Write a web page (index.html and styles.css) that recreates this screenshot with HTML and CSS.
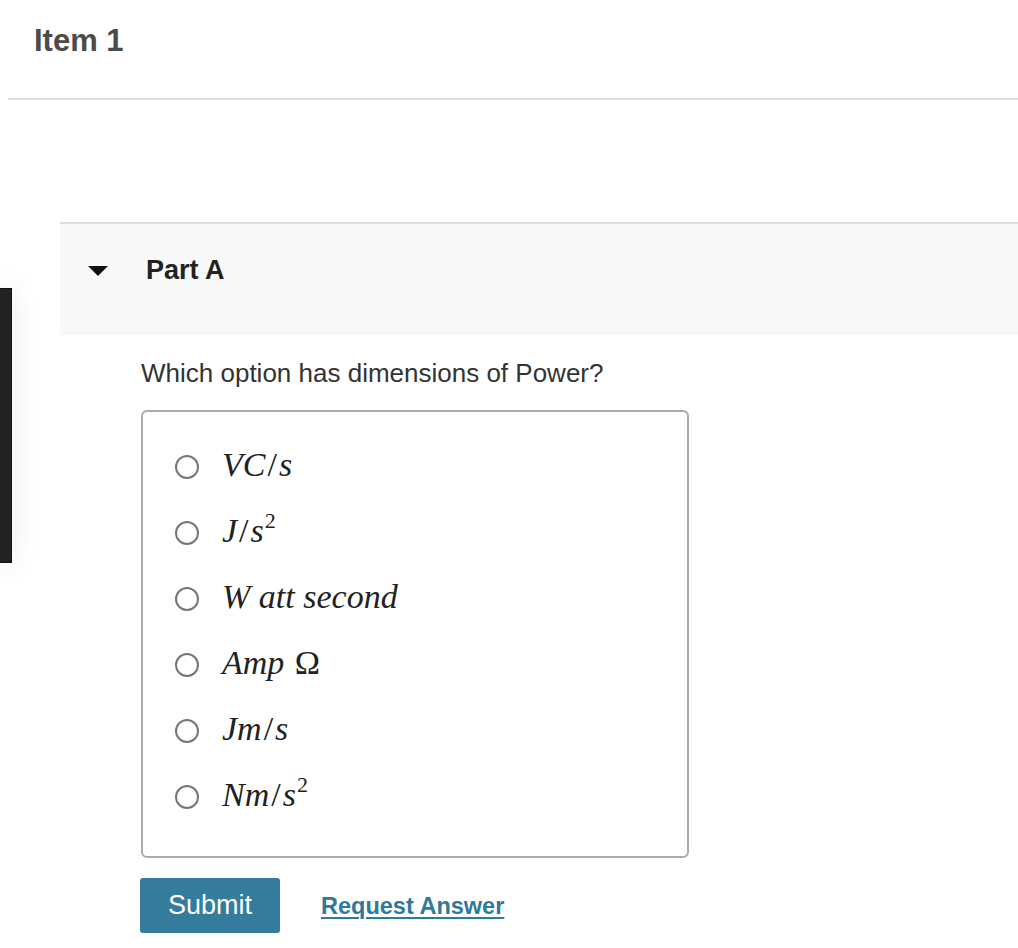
FILE: index.html
```
<!DOCTYPE html>
<html lang="en">
<head>
    <meta charset="UTF-8">
    <title>Item 1</title>
    <link rel="stylesheet" href="styles.css">
</head>
<body>
    <div class="side-tab"></div>

    <header class="item-header">
        <h1>Item 1</h1>
    </header>
    <hr class="divider">

    <section class="part">
        <div class="part-head">
            <svg class="caret" width="20" height="10" viewBox="0 0 20 10"><polygon points="0,0 20,0 10,10" fill="#111"/></svg>
            <h2>Part A</h2>
        </div>

        <div class="part-body">
            <p class="question">Which option has dimensions of Power?</p>

            <div class="choices">
                <label class="choice"><span class="radio"></span><span class="math">VC<span class="up">/</span>s</span></label>
                <label class="choice"><span class="radio"></span><span class="math">J<span class="up">/</span>s<sup>2</sup></span></label>
                <label class="choice"><span class="radio"></span><span class="math">W att second</span></label>
                <label class="choice"><span class="radio"></span><span class="math">Amp <span class="up">&Omega;</span></span></label>
                <label class="choice"><span class="radio"></span><span class="math">Jm<span class="up">/</span>s</span></label>
                <label class="choice"><span class="radio"></span><span class="math">Nm<span class="up">/</span>s<sup>2</sup></span></label>
            </div>

            <div class="actions">
                <button class="submit-btn">Submit</button>
                <a href="#" class="request-link">Request Answer</a>
            </div>
        </div>
    </section>
</body>
</html>
```

FILE: styles.css
```
/* Basic styling */
body {
    font-family: "Liberation Sans", Arial, sans-serif;
    margin: 0;
    padding: 0;
    background-color: #fff;
}
.side-tab {
    position: absolute;
    left: 0;
    top: 288px;
    width: 11px;
    height: 273px;
    background-color: #222;
    border: 1px solid #111;
    border-left: none;
    box-shadow: 0 0 24px rgba(0,0,0,0.12);
}
.item-header {
    padding: 23px 0 0 34px;
}
.item-header h1 {
    margin: 0;
    font-size: 31px;
    line-height: 36px;
    color: #4b4b4b;
}
.divider {
    margin: 39px 0 0 8px;
    border: none;
    height: 2px;
    background-color: #ddd;
}
/* Part */
.part {
    margin: 122px 0 0 60px;
    border-top: 2px solid #ddd;
}
.part-head {
    display: flex;
    align-items: center;
    height: 31px;
    padding: 31px 0 49px 28px;
    background-color: #f8f8f8;
}
.part-head .caret {
    margin-right: 38px;
}
.part-head h2 {
    margin: 0;
    font-size: 27px;
    line-height: 31px;
    color: #222;
}
.part-body {
    padding: 23px 0 0 81px;
}
.question {
    margin: 0 0 22px 0;
    font-size: 26px;
    line-height: 30px;
    color: #333;
}
.choices {
    width: 512px;
    padding: 22px 0 26px 32px;
    border: 2px solid #ababab;
    border-radius: 6px;
}
.choice {
    display: flex;
    align-items: center;
    height: 66px;
}
.radio {
    width: 20px;
    height: 20px;
    border: 2px solid #767676;
    border-radius: 50%;
    margin-right: 23px;
    flex-shrink: 0;
}
.math {
    font-family: "Liberation Serif", "Times New Roman", serif;
    font-style: italic;
    font-size: 34px;
    line-height: 40px;
    color: #222;
    margin-bottom: 5px;
    white-space: nowrap;
}
.math .up {
    font-style: normal;
    margin: 0 2px;
}
.math sup {
    font-style: normal;
    font-size: 22px;
    line-height: 0;
    vertical-align: 14px;
    margin-left: 1px;
}
.actions {
    display: flex;
    align-items: baseline;
    margin-top: 20px;
}
.submit-btn {
    font-family: "Liberation Sans", Arial, sans-serif;
    font-size: 27px;
    line-height: 31px;
    padding: 12px 28px;
    background-color: #347b9c;
    color: #fff;
    border: none;
    border-radius: 3px;
    margin-left: -1px;
    cursor: pointer;
}
.request-link {
    margin-left: 41px;
    font-size: 23.5px;
    font-weight: bold;
    color: #2e7a9b;
    text-decoration: underline;
    text-decoration-thickness: 2px;
    text-underline-offset: 3px;
}
```
